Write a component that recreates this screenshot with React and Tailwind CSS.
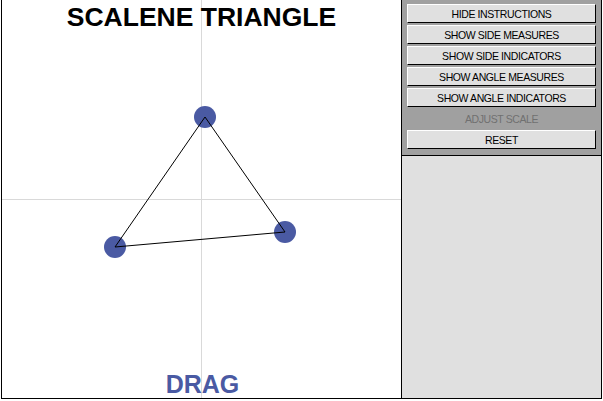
import React from 'react';

const buttons = [
  'HIDE INSTRUCTIONS',
  'SHOW SIDE MEASURES',
  'SHOW SIDE INDICATORS',
  'SHOW ANGLE MEASURES',
  'SHOW ANGLE INDICATORS',
];

function PanelButton({ label }) {
  return (
    <button className="h-[19px] w-full pt-[1px] bg-[#e0e0e0] border-t border-l border-t-white border-l-white border-b border-r border-b-black border-r-black text-[10.5px] leading-none tracking-[-0.4px] text-black flex items-center justify-center">
      {label}
    </button>
  );
}

export default function App() {
  // vertices in canvas coordinates
  const pts = [
    [203, 117],
    [113, 247],
    [283, 232],
  ];

  return (
    <div className="w-[603px] h-[401px] bg-white" style={{ fontFamily: '"Liberation Sans", Arial, sans-serif' }}>
      <div className="ml-px w-[601px] h-[399px] border-l border-r border-b border-black flex">
        {/* Canvas */}
        <div className="relative w-[399px] h-full flex flex-col items-center justify-between">
          <svg className="absolute inset-0" width="399" height="398" viewBox="0 0 399 398">
            <line x1="199.5" y1="0" x2="199.5" y2="398" stroke="#d9d9d9" strokeWidth="1" />
            <line x1="0" y1="199.5" x2="399" y2="199.5" stroke="#d9d9d9" strokeWidth="1" />
            {pts.map(([x, y], i) => (
              <circle key={i} cx={x} cy={y} r="11" fill="#4a5aa3" />
            ))}
            <polygon
              points={pts.map((p) => p.join(',')).join(' ')}
              fill="none"
              stroke="#000"
              strokeWidth="1"
            />
          </svg>
          <h1 className="relative pt-[4px] text-[26.5px] leading-none font-bold text-black">SCALENE TRIANGLE</h1>
          <div className="relative pb-[1px] pl-[2px] text-[25px] leading-none font-bold text-[#4a5aa3]">DRAG</div>
        </div>

        {/* Control panel */}
        <div className="w-[200px] h-full border-l border-black flex flex-col bg-[#e0e0e0]">
          <div className="h-[156px] bg-[#a0a0a0] border-b border-black px-[5px] pt-[4px] flex flex-col gap-[2px]">
            {buttons.map((b) => (
              <PanelButton key={b} label={b} />
            ))}
            <div className="h-[19px] pt-[2px] flex items-center justify-center text-[10.5px] leading-none tracking-[-0.4px] text-[#707070]">
              ADJUST SCALE
            </div>
            <PanelButton label="RESET" />
          </div>
        </div>
      </div>
    </div>
  );
}
